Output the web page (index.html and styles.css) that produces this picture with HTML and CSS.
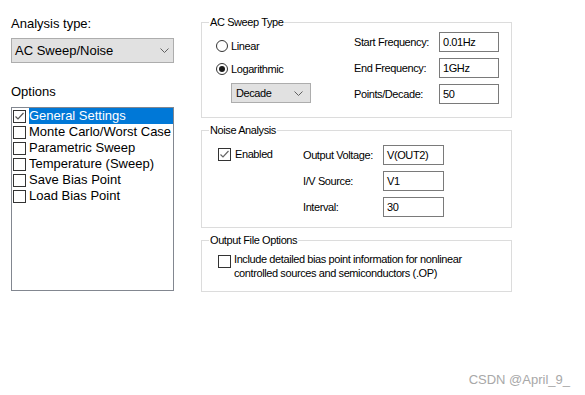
FILE: index.html
```html
<!DOCTYPE html>
<html lang="en">
  <head>
    <meta charset="UTF-8" />
    <title>Simulation Settings</title>
    <link rel="stylesheet" href="styles.css">
  </head>
  <body>
    <section class="dialog">
      <div class="side">
        <div class="side__label">Analysis type:</div>
        <div class="combo combo--wide">
          <span>AC Sweep/Noise</span>
          <svg class="combo__arrow" width="9" height="5" viewBox="0 0 9 5">
            <polyline points="0.5,0.5 4.5,4.5 8.5,0.5" fill="none" stroke="#606060" />
          </svg>
        </div>
        <div class="side__label side__label--options">Options</div>
        <ul class="options">
          <li class="options__item">
            <span class="check">
              <svg width="11" height="11" viewBox="0 0 11 11"><polyline points="1.5,5.5 4,8 9.5,2" fill="none" stroke="#555" stroke-width="1.2" /></svg>
            </span>
            <span class="options__text options__text--active">General Settings</span>
          </li>
          <li class="options__item"><span class="check"></span><span class="options__text">Monte Carlo/Worst Case</span></li>
          <li class="options__item"><span class="check"></span><span class="options__text">Parametric Sweep</span></li>
          <li class="options__item"><span class="check"></span><span class="options__text">Temperature (Sweep)</span></li>
          <li class="options__item"><span class="check"></span><span class="options__text">Save Bias Point</span></li>
          <li class="options__item"><span class="check"></span><span class="options__text">Load Bias Point</span></li>
        </ul>
      </div>

      <div class="groups">
        <fieldset class="group">
          <legend>AC Sweep Type</legend>
          <div class="group__body sweep">
            <div class="sweep__modes">
              <label class="radio"><span class="radio__dot"></span>Linear</label>
              <label class="radio"><span class="radio__dot radio__dot--on"></span>Logarithmic</label>
              <div class="combo combo--small">
                <span>Decade</span>
                <svg class="combo__arrow" width="9" height="5" viewBox="0 0 9 5">
                  <polyline points="0.5,0.5 4.5,4.5 8.5,0.5" fill="none" stroke="#606060" />
                </svg>
              </div>
            </div>
            <div class="fields">
              <span>Start Frequency:</span><span class="field">0.01Hz</span>
              <span>End Frequency:</span><span class="field">1GHz</span>
              <span>Points/Decade:</span><span class="field">50</span>
            </div>
          </div>
        </fieldset>

        <fieldset class="group">
          <legend>Noise Analysis</legend>
          <div class="group__body noise">
            <label class="tick">
              <span class="check">
                <svg width="11" height="11" viewBox="0 0 11 11"><polyline points="1.5,5.5 4,8 9.5,2" fill="none" stroke="#666" stroke-width="1.2" /></svg>
              </span>
              Enabled
            </label>
            <span class="noise__label">Output Voltage:</span><span class="field field--noise">V(OUT2)</span>
            <span class="noise__label">I/V Source:</span><span class="field field--noise">V1</span>
            <span class="noise__label">Interval:</span><span class="field field--noise">30</span>
          </div>
        </fieldset>

        <fieldset class="group">
          <legend>Output File Options</legend>
          <div class="group__body output">
            <span class="check check--top"></span>
            <span class="output__text">Include detailed bias point information for nonlinear<br />controlled sources and semiconductors (.OP)</span>
          </div>
        </fieldset>
      </div>
    </section>

    <div class="watermark">CSDN @April_9_</div>
  </body>
</html>
```

FILE: styles.css
```css
* {
  margin: 0;
  padding: 0;
  box-sizing: border-box;
}
html {
  font-family: "Liberation Sans", Arial, sans-serif;
  color: #000;
  background: #fff;
}
body {
  position: relative;
  width: 585px;
  height: 395px;
}
.dialog {
  display: flex;
  gap: 27px;
  padding: 15px 0 0 11px;
}

/* left column */
.side {
  width: 163px;
  padding-top: 1px;
  font-size: 13px;
}
.side__label {
  line-height: 15px;
}
.side__label--options {
  margin-top: 21px;
}
.combo {
  display: flex;
  align-items: center;
  justify-content: space-between;
  background-color: #e1e1e1;
  border: 1px solid #adadad;
}
.combo--wide {
  height: 25px;
  margin-top: 7px;
  padding: 0 4px 0 3px;
  line-height: 23px;
}
.combo--small {
  width: 80px;
  height: 20px;
  margin: 6px 0 0 15px;
  padding: 0 7px 0 4px;
  line-height: 18px;
}
.options {
  list-style: none;
  height: 184px;
  margin-top: 8px;
  border: 1px solid #828790;
}
.options__item {
  display: flex;
  align-items: center;
  height: 16px;
  padding-left: 1px;
}
.options__item .check {
  margin-right: 3px;
}
.options__text {
  flex: 1;
  line-height: 16px;
  white-space: nowrap;
  overflow: hidden;
}
.options__text--active {
  background-color: #0078d7;
  color: #fff;
}
.check {
  display: flex;
  align-items: center;
  justify-content: center;
  flex: none;
  width: 13px;
  height: 13px;
  border: 1px solid #333;
  background: #fff;
}

/* right column */
.groups {
  display: flex;
  flex-direction: column;
  gap: 5px;
  width: 311px;
  font-size: 11px;
  letter-spacing: -0.4px;
}
.group {
  border: 1px solid #dcdcdc;
  min-width: 0;
}
.group legend {
  margin-left: 7px;
  padding: 0 1px;
  line-height: 14px;
}
.sweep {
  display: flex;
  padding: 3px 0 13px 14px;
}
.sweep__modes {
  width: 138px;
  padding-top: 6px;
}
.radio {
  display: flex;
  align-items: center;
  height: 16px;
}
.radio + .radio {
  margin-top: 7px;
}
.radio__dot {
  display: flex;
  align-items: center;
  justify-content: center;
  width: 12px;
  height: 12px;
  margin-right: 3px;
  border: 1px solid #333;
  border-radius: 50%;
}
.radio__dot--on::after {
  content: "";
  width: 6px;
  height: 6px;
  border-radius: 50%;
  background: #1a1a1a;
}
.fields {
  display: grid;
  grid-template-columns: 85px 60px;
  align-items: center;
  row-gap: 6px;
}
.field {
  height: 20px;
  padding-left: 3px;
  line-height: 18px;
  border: 1px solid #7a7a7a;
  background: #fff;
}
.noise {
  display: grid;
  grid-template-columns: 85px 80px 61px;
  align-items: center;
  row-gap: 6px;
  padding: 8px 0 10px 16px;
}
.noise__label {
  grid-column: 2;
}
.tick {
  display: flex;
  align-items: center;
  gap: 4px;
  margin-top: -2px;
}
.output {
  display: flex;
  gap: 3px;
  padding: 5px 0 11px 16px;
}
.check--top {
  margin-top: 3px;
}
.output__text {
  line-height: 14px;
}

.watermark {
  position: absolute;
  right: 15px;
  bottom: 8px;
  font-size: 13px;
  color: #a8a8a8;
}
```
